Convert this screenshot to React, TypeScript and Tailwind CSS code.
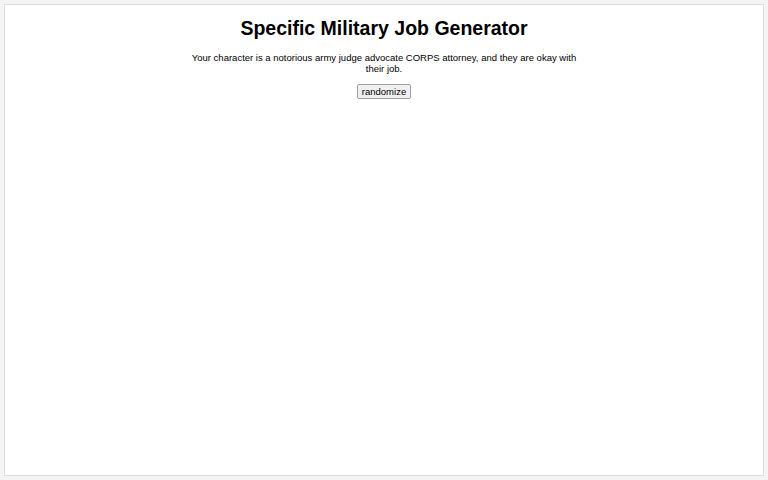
export default function App() {
  return (
    <div className="min-h-screen bg-[#f4f4f4] p-[4px] font-['Liberation_Sans',Arial,sans-serif]">
      <div className="h-[472px] border border-[#dcdcdc] bg-white flex flex-col items-center">
        <h1 className="mt-[12px] text-[19.5px] font-bold leading-[23px] text-black">Specific Military Job Generator</h1>
        <p className="mt-[12px] w-[400px] text-center text-[9.5px] leading-[11px] text-black">
          Your character is a notorious army judge advocate CORPS attorney, and they are okay with their job.
        </p>
        <button className="mt-[10px] h-[15px] rounded-[2px] border border-[#a0a0a0] bg-[#f0f0f0] px-[4px] text-[9.5px] leading-[12px] text-black">
          randomize
        </button>
      </div>
    </div>
  );
}
